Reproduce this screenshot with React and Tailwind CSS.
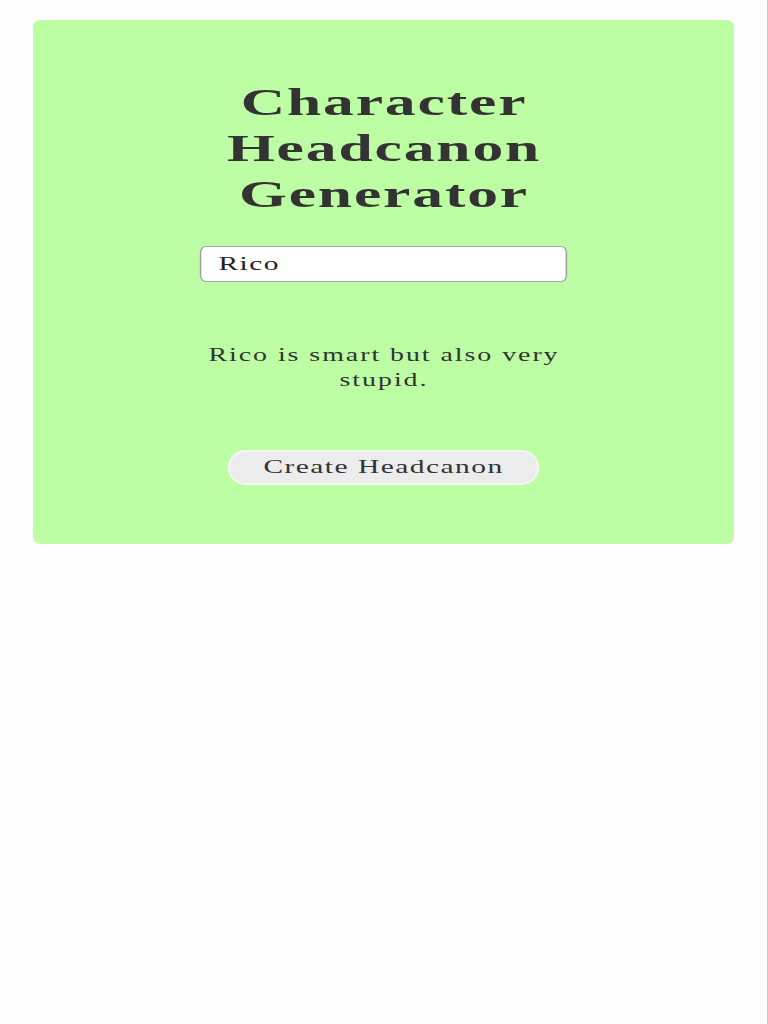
import React, { useState } from "react";

const serif = "font-['Liberation_Serif','Times_New_Roman',serif]";

const App = () => {
  const [name, setName] = useState("Rico");
  const [headcanon, setHeadcanon] = useState("Rico is smart but also very stupid.");

  const createHeadcanon = () => {
    const traits = ["smart but also very stupid", "secretly a great cook", "afraid of pigeons"];
    const pick = traits[Math.floor(Math.random() * traits.length)];
    setHeadcanon(`${name} is ${pick}.`);
  };

  return (
    <div className={`min-h-screen w-full bg-[#fdfdfd] border-r border-[#c8c8c8] pt-5 px-[33px] ${serif}`}>
      <div className="bg-[#bdfea4] rounded-[7px] pt-[59px] pb-[59px] flex flex-col items-center text-[#333333]">
        <h1 className="w-[200px] scale-x-[1.62] text-[38px] leading-[46px] font-bold tracking-[0.03em] text-center">
          Character Headcanon Generator
        </h1>

        <input
          type="text"
          value={name}
          onChange={(e) => setName(e.target.value)}
          className="mt-[29px] w-[237px] h-9 scale-x-[1.55] bg-white border-x border-y-[1.5px] border-[#a3a3a3] rounded-[4px_/_6px] pl-[11px] text-[19px] tracking-[0.05em] text-[#222] outline-none"
        />

        <p className="mt-[61px] w-[236px] scale-x-[1.55] text-[18px] leading-[25px] tracking-[0.07em] text-center">
          {headcanon}
        </p>

        <button
          type="button"
          onClick={createHeadcanon}
          className="mt-[57px] w-[311px] h-[35px] rounded-full bg-[#ececec] border-2 border-[#f7f7f7] text-[19px] text-[#333] flex items-center justify-center"
        >
          <span className="inline-block scale-x-[1.55] tracking-[0.05em]">Create Headcanon</span>
        </button>
      </div>
    </div>
  );
};

export default App;
